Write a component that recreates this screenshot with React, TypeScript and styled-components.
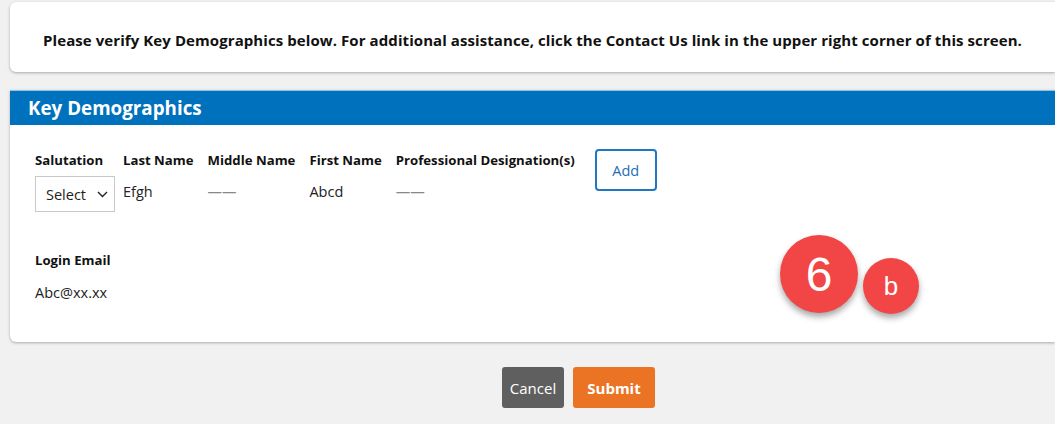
import styled, { createGlobalStyle } from 'styled-components';

const GlobalStyle = createGlobalStyle`
  html, body {
    margin: 0;
    padding: 0;
    background: #f1f1f1;
    font-family: "Open Sans", "Noto Sans", sans-serif;
    color: #1a1a1a;
  }
`;

export default function App() {
  return (
    <>
      <GlobalStyle />
      <Page>
        <Notice>
          Please verify Key Demographics below. For additional assistance, click the Contact Us link in the upper right corner of this screen.
        </Notice>
        <Section>
          <SectionHeader>Key Demographics</SectionHeader>
          <SectionBody>
            <FieldRow>
              <Field $tight>
                <Label>Salutation</Label>
                <SelectBox>
                  Select
                  <svg width="11" height="7" viewBox="0 0 11 7">
                    <path d="M1 1 L5.5 5.5 L10 1" fill="none" stroke="#222" strokeWidth="1.4" />
                  </svg>
                </SelectBox>
              </Field>
              <Field>
                <Label>Last Name</Label>
                <Value>Efgh</Value>
              </Field>
              <Field>
                <Label>Middle Name</Label>
                <Value $muted>——</Value>
              </Field>
              <Field>
                <Label>First Name</Label>
                <Value>Abcd</Value>
              </Field>
              <Field>
                <Label>Professional Designation(s)</Label>
                <Value $muted>——</Value>
              </Field>
              <AddButton>Add</AddButton>
            </FieldRow>
            <EmailBlock>
              <Label>Login Email</Label>
              <EmailValue>Abc@xx.xx</EmailValue>
            </EmailBlock>
            <Badge $size={78} $font={48} style={{ left: 770, top: 110 }}>6</Badge>
            <Badge $size={56} $font={26} style={{ left: 853, top: 133 }}>b</Badge>
          </SectionBody>
        </Section>
        <Actions>
          <ActionButton $bg="#5f5f5f" $weight={400} $width={62}>Cancel</ActionButton>
          <ActionButton $bg="#ea7324" $weight={700} $width={82}>Submit</ActionButton>
        </Actions>
      </Page>
    </>
  );
}

const Page = styled.div`
  padding: 2px 0 0 10px;
  display: flex;
  flex-direction: column;
`;

const Notice = styled.div`
  background: #fff;
  border-radius: 6px 0 0 6px;
  box-shadow: 0 1px 3px rgba(0, 0, 0, 0.3);
  height: 70px;
  box-sizing: border-box;
  padding-top: 6px;
  display: flex;
  align-items: center;
  justify-content: center;
  font-weight: 700;
  font-size: 15px;
  letter-spacing: 0.08px;
  color: #111;
`;

const Section = styled.div`
  margin-top: 18px;
  background: #fff;
  border-radius: 0 0 0 6px;
  box-shadow: 0 1px 3px rgba(0, 0, 0, 0.3);
`;

const SectionHeader = styled.div`
  background: #0071bc;
  border-top: 1px solid #8cc4ea;
  height: 34px;
  display: flex;
  align-items: center;
  padding-left: 18px;
  color: #fff;
  font-weight: 700;
  font-size: 18.8px;
`;

const SectionBody = styled.div`
  position: relative;
  height: 217px;
  padding: 27px 25px 0;
  box-sizing: border-box;
`;

const FieldRow = styled.div`
  display: flex;
  align-items: flex-start;
  gap: 14px;
`;

const Field = styled.div<{ $tight?: boolean }>`
  display: flex;
  flex-direction: column;
  gap: 8px;
  margin-right: ${(p) => (p.$tight ? '-6px' : '0')};
`;

const Label = styled.div`
  font-weight: 700;
  font-size: 13.2px;
  color: #111;
  line-height: 16px;
`;

const Value = styled.div<{ $muted?: boolean }>`
  margin-top: 6px;
  font-size: 14.5px;
  line-height: 20px;
  color: ${(p) => (p.$muted ? '#888' : '#222')};
`;

const SelectBox = styled.div`
  width: 80px;
  height: 36px;
  box-sizing: border-box;
  border: 1px solid #c9c9c9;
  display: flex;
  align-items: center;
  justify-content: space-between;
  padding: 0 6px 0 10px;
  font-size: 14.5px;
  color: #222;
`;

const AddButton = styled.button`
  margin-top: -3px;
  margin-left: 6px;
  width: 62px;
  height: 42px;
  background: #fff;
  border: 2px solid #1f78c1;
  border-radius: 4px;
  color: #1f6db5;
  font-family: "Open Sans", sans-serif;
  font-size: 14.5px;
`;

const EmailBlock = styled.div`
  margin-top: 40px;
  display: flex;
  flex-direction: column;
  gap: 15px;
`;

const EmailValue = styled.div`
  font-size: 14.5px;
  color: #222;
`;

const Badge = styled.div<{ $size: number; $font: number }>`
  position: absolute;
  width: ${(p) => p.$size}px;
  height: ${(p) => p.$size}px;
  border-radius: 50%;
  background: #f24646;
  color: #fff;
  display: flex;
  align-items: center;
  justify-content: center;
  font-family: "Liberation Sans", Arial, sans-serif;
  font-size: ${(p) => p.$font}px;
  box-shadow: 0 4px 6px rgba(0, 0, 0, 0.35);
`;

const Actions = styled.div`
  display: flex;
  gap: 9px;
  padding: 25px 0 0 492px;
`;

const ActionButton = styled.button<{ $bg: string; $weight: number; $width: number }>`
  width: ${(p) => p.$width}px;
  height: 41px;
  padding: 0;
  border: none;
  border-radius: 3px;
  background: ${(p) => p.$bg};
  color: #fff;
  font-family: "Open Sans", sans-serif;
  font-weight: ${(p) => p.$weight};
  font-size: 15px;
`;
